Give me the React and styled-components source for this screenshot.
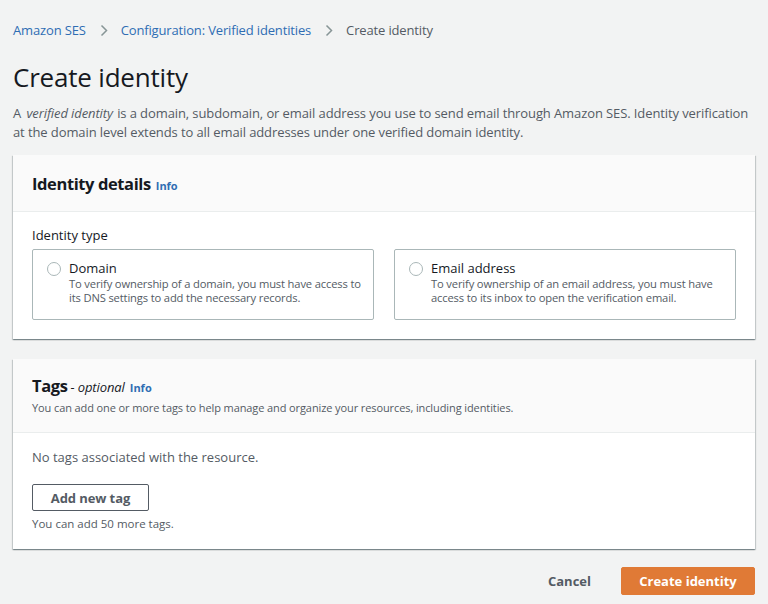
import React from "react";
import styled, { createGlobalStyle } from "styled-components";

const Global = createGlobalStyle`
  html, body { margin: 0; padding: 0; background: #f2f3f3; }
  body { font-family: "Open Sans", "Liberation Sans", sans-serif; color: #16191f; }
  * { box-sizing: border-box; }
`;

const Page = styled.div`
  width: 768px;
  height: 604px;
  padding: 20px 13px 0 13px;
  background: #f2f3f3;
  overflow: hidden;
`;

const Crumbs = styled.nav`
  display: flex;
  align-items: center;
  height: 20px;
  font-size: 13px;
  letter-spacing: -0.15px;
`;

const Crumb = styled.span`
  color: ${(p) => (p.$current ? "#545b64" : "#2f6db3")};
`;

const Sep = styled.span`
  display: flex;
  align-items: center;
  margin: 0 13px 0 14px;
  color: #879596;
`;

const Title = styled.h1`
  margin: 19px 0 0 0;
  font-size: 26px;
  line-height: 36px;
  font-weight: 400;
  color: #16191f;
  letter-spacing: -0.2px;
`;

const Desc = styled.p`
  margin: 9px 0 0 0;
  font-size: 13px;
  line-height: 19px;
  color: #545b64;
  letter-spacing: -0.1px;
`;

const Em = styled.em`
  display: inline-block;
  font-style: italic;
  padding: 0 1px 0 2px;
`;

const Card = styled.section`
  margin-top: ${(p) => p.$mt}px;
  background: #fff;
  box-shadow: 0 1px 1px 0 rgba(0, 28, 36, 0.3), 1px 1px 1px 0 rgba(0, 28, 36, 0.15),
    -1px 1px 1px 0 rgba(0, 28, 36, 0.15);
`;

const CardHeader = styled.div`
  background: #fafafa;
  border-bottom: 1px solid #eaeded;
  height: ${(p) => p.$h}px;
  padding: ${(p) => p.$pt}px 19px 0 19px;
`;

const HeadLine = styled.div`
  display: flex;
  align-items: baseline;
  gap: 5px;
  font-size: 16.5px;
  line-height: 22px;
  font-weight: 700;
  color: #16191f;
  letter-spacing: -0.4px;
`;

const Optional = styled.span`
  font-size: 13px;
  font-weight: 400;
  font-style: italic;
  margin-left: -2px;
  letter-spacing: -0.1px;
`;

const Info = styled.span`
  font-size: 11px;
  font-weight: 700;
  color: #2f6db3;
  letter-spacing: 0;
`;

const HeadDesc = styled.div`
  margin-top: 1px;
  font-size: 11px;
  line-height: 16px;
  color: #545b64;
  letter-spacing: -0.1px;
`;

const CardBody = styled.div`
  padding: ${(p) => p.$pt}px 19px ${(p) => p.$pb}px 19px;
`;

const Label = styled.div`
  font-size: 13px;
  line-height: 18px;
  color: #16191f;
`;

const Options = styled.div`
  display: grid;
  grid-template-columns: 1fr 1fr;
  gap: 20px;
  margin-top: 5px;
`;

const OptionCard = styled.label`
  display: flex;
  align-items: flex-start;
  height: 71px;
  border: 1px solid #aab7b8;
  border-radius: 2px;
  padding: 10px 12px 0 14px;
`;

const Radio = styled.span`
  flex: none;
  width: 14px;
  height: 14px;
  border: 1px solid #aab7b8;
  border-radius: 50%;
  margin-top: 2px;
  margin-right: 8px;
  background: #fff;
`;

const OptText = styled.div`
  display: flex;
  flex-direction: column;
`;

const OptTitle = styled.span`
  font-size: 13px;
  line-height: 17px;
  color: #16191f;
`;

const OptDesc = styled.span`
  font-size: 11.2px;
  line-height: 14px;
  color: #545b64;
  letter-spacing: -0.15px;
`;

const Muted = styled.div`
  font-size: ${(p) => p.$fs}px;
  line-height: ${(p) => p.$lh}px;
  color: #545b64;
  margin-top: ${(p) => p.$mt || 0}px;
`;

const SecondaryButton = styled.button`
  display: block;
  margin-top: 18px;
  width: 117px;
  height: 27px;
  background: #fff;
  border: 1px solid #545b64;
  border-radius: 2px;
  font-family: inherit;
  font-size: 13px;
  font-weight: 700;
  color: #545b64;
  padding: 0;
  letter-spacing: -0.1px;
`;

const Footer = styled.div`
  display: flex;
  justify-content: flex-end;
  align-items: center;
  gap: 14px;
  margin-top: 18px;
`;

const LinkButton = styled.button`
  background: none;
  border: none;
  font-family: inherit;
  font-size: 13px;
  font-weight: 700;
  color: #545b64;
  padding: 0 16px;
  height: 27px;
`;

const PrimaryButton = styled.button`
  width: 134px;
  height: 28px;
  background: #e07a36;
  border: 1px solid #e07a36;
  border-radius: 2px;
  font-family: inherit;
  font-size: 13px;
  font-weight: 700;
  color: #fff;
  padding: 0;
`;

const Chevron = () => (
  <svg width="8" height="13" viewBox="0 0 8 13" fill="none">
    <path d="M1.5 1.5 L6.5 6.5 L1.5 11.5" stroke="#879596" strokeWidth="1.5" />
  </svg>
);

export default function App() {
  return (
    <Page>
      <Global />
      <Crumbs>
        <Crumb>Amazon SES</Crumb>
        <Sep><Chevron /></Sep>
        <Crumb>Configuration: Verified identities</Crumb>
        <Sep><Chevron /></Sep>
        <Crumb $current>Create identity</Crumb>
      </Crumbs>
      <Title>Create identity</Title>
      <Desc>
        A <Em>verified identity</Em> is a domain, subdomain, or email address you use to send email
        through Amazon SES. Identity verification at the domain level extends to all email addresses
        under one verified domain identity.
      </Desc>

      <Card $mt={13}>
        <CardHeader $h={57} $pt={18}>
          <HeadLine>
            Identity details <Info>Info</Info>
          </HeadLine>
        </CardHeader>
        <CardBody $pt={14} $pb={19}>
          <Label>Identity type</Label>
          <Options>
            <OptionCard>
              <Radio />
              <OptText>
                <OptTitle>Domain</OptTitle>
                <OptDesc>
                  To verify ownership of a domain, you must have access to its DNS settings to add the
                  necessary records.
                </OptDesc>
              </OptText>
            </OptionCard>
            <OptionCard>
              <Radio />
              <OptText>
                <OptTitle>Email address</OptTitle>
                <OptDesc>
                  To verify ownership of an email address, you must have access to its inbox to open the
                  verification email.
                </OptDesc>
              </OptText>
            </OptionCard>
          </Options>
        </CardBody>
      </Card>

      <Card $mt={20}>
        <CardHeader $h={74} $pt={16}>
          <HeadLine>
            Tags <Optional>- optional</Optional> <Info>Info</Info>
          </HeadLine>
          <HeadDesc>
            You can add one or more tags to help manage and organize your resources, including identities.
          </HeadDesc>
        </CardHeader>
        <CardBody $pt={15} $pb={17}>
          <Muted $fs={13} $lh={18}>No tags associated with the resource.</Muted>
          <SecondaryButton>Add new tag</SecondaryButton>
          <Muted $fs={11.5} $lh={16} $mt={5}>You can add 50 more tags.</Muted>
        </CardBody>
      </Card>

      <Footer>
        <LinkButton>Cancel</LinkButton>
        <PrimaryButton>Create identity</PrimaryButton>
      </Footer>
    </Page>
  );
}
